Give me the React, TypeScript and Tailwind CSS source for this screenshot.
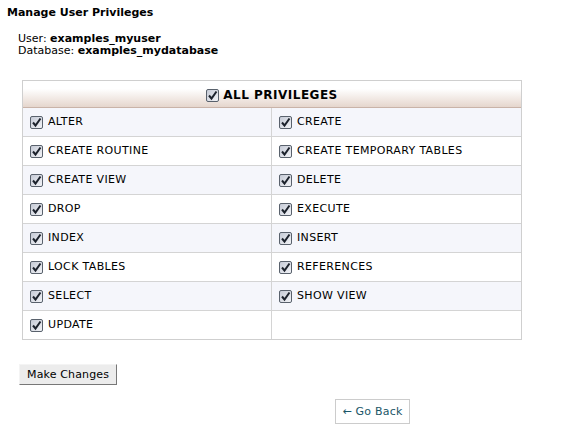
import React from "react";

const privileges: [string, string | null][] = [
  ["ALTER", "CREATE"],
  ["CREATE ROUTINE", "CREATE TEMPORARY TABLES"],
  ["CREATE VIEW", "DELETE"],
  ["DROP", "EXECUTE"],
  ["INDEX", "INSERT"],
  ["LOCK TABLES", "REFERENCES"],
  ["SELECT", "SHOW VIEW"],
  ["UPDATE", null],
];

function CheckBox() {
  return (
    <svg width="13" height="13" viewBox="0 0 13 13" className="shrink-0">
      <defs>
        <linearGradient id="cbg" x1="0" y1="0" x2="1" y2="1">
          <stop offset="0" stopColor="#c3c8d4" />
          <stop offset="1" stopColor="#f4f5f8" />
        </linearGradient>
      </defs>
      <rect x="0.5" y="0.5" width="12" height="12" rx="1.5" fill="url(#cbg)" stroke="#59616c" />
      <path d="M3 6.5 L5.5 9.5 L10.5 2.5" fill="none" stroke="#1c222c" strokeWidth="2" />
    </svg>
  );
}

function Cell({ label }: { label: string | null }) {
  return (
    <div className="flex h-[28px] items-center gap-[5px] pl-[7px]">
      {label && (
        <>
          <CheckBox />
          <span className="tracking-[0.35px]">{label}</span>
        </>
      )}
    </div>
  );
}

export default function App() {
  return (
    <div
      className="min-h-[436px] bg-white text-[11px] leading-[12px] text-black"
      style={{ fontFamily: '"DejaVu Sans", Verdana, sans-serif' }}
    >
      <div className="pl-[7px] pt-[7px]">
        <h1 className="font-bold">Manage User Privileges</h1>
        <div className="mt-[14px] pl-[11px]">
          <div>
            User: <b>examples_myuser</b>
          </div>
          <div>
            Database: <b>examples_mydatabase</b>
          </div>
        </div>
      </div>

      <div className="ml-[22px] mt-[23px] w-[500px] border border-[#cfcfcf]">
        <div className="flex h-[27px] items-center justify-center gap-[4px] border-b border-[#c9b3a8] bg-gradient-to-b from-white from-30% to-[#e5d6cd] pt-[2px] text-[12px] font-bold">
          <CheckBox />
          <span className="tracking-[0.5px]">ALL PRIVILEGES</span>
        </div>
        {privileges.map(([a, b], i) => (
          <div
            key={a}
            className={`grid grid-cols-[249px_1fr] ${
              i < privileges.length - 1 ? "border-b border-[#d4d4d4]" : ""
            } ${i % 2 === 0 ? "bg-[#f5f6fb]" : "bg-white"}`}
          >
            <div className="border-r border-[#d4d4d4]">
              <Cell label={a} />
            </div>
            <Cell label={b} />
          </div>
        ))}
      </div>

      <div className="ml-[19px] mt-[24px]">
        <button
          className="h-[21px] border border-[#f4f4f4] border-b-[#777] border-r-[#777] bg-[#ececec] px-[7px] text-[11px] tracking-[0.15px]"
          style={{ fontFamily: '"DejaVu Sans", Verdana, sans-serif' }}
        >
          Make Changes
        </button>
      </div>

      <div className="ml-[335px] mt-[14px] flex h-[25px] w-[75px] items-center justify-center border border-[#cccccc]">
        <a href="#" className="text-[#1b5668] tracking-[0.2px]">
          ← Go Back
        </a>
      </div>
    </div>
  );
}
